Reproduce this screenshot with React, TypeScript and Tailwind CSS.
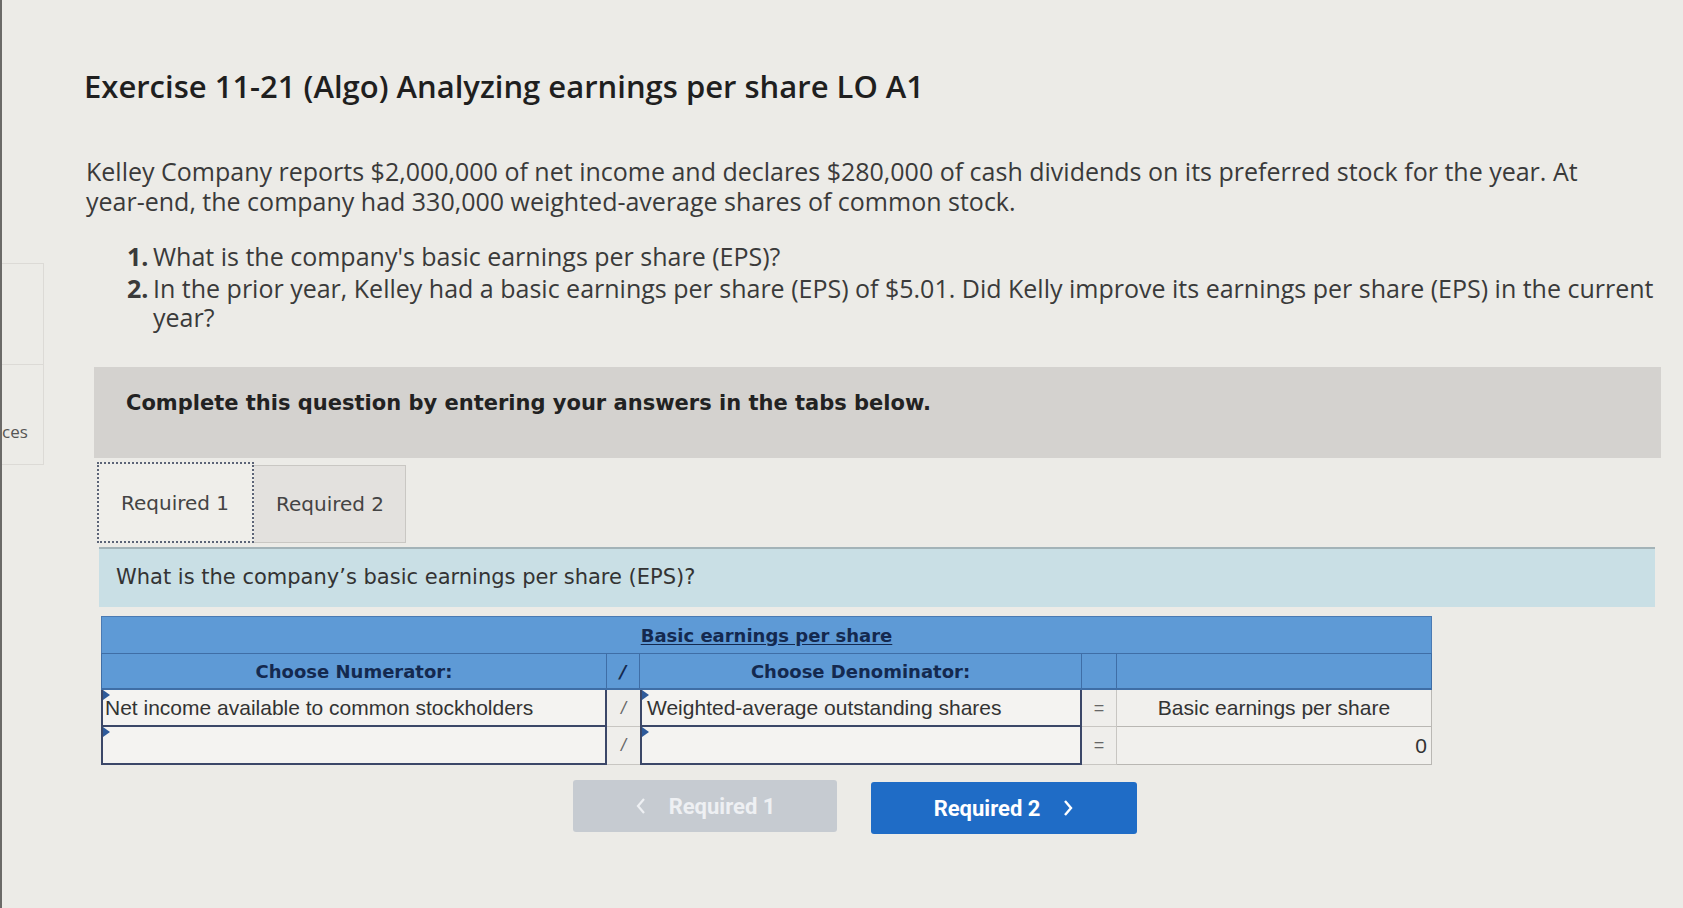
import React from "react";

const body = { fontFamily: "'Open Sans', Lato, sans-serif" } as React.CSSProperties;
const verdana = { fontFamily: "'DejaVu Sans', Verdana, sans-serif" } as React.CSSProperties;
const arial = { fontFamily: "'Liberation Sans', Arial, sans-serif" } as React.CSSProperties;

function Marker() {
  return (
    <span className="absolute left-0 top-0 h-0 w-0 border-y-[5px] border-l-[7px] border-y-transparent border-l-[#2e5a9a]" />
  );
}

export default function App() {
  return (
    <div className="flex min-h-[908px] w-full bg-[#ecebe7] text-[#333]">
      {/* left sidebar */}
      <div className="flex w-[44px] shrink-0 flex-col border-l-2 border-l-[#6b6a68]">
        <div className="h-[263px]" />
        <div className="h-[102px] border-y border-r border-[#dcdad6]" />
        <div className="flex h-[100px] items-start overflow-hidden border-b border-r border-[#dcdad6]">
          <span className="whitespace-nowrap pt-[56px] text-[17px] leading-[22px] text-[#555]" style={body}>
            ces
          </span>
        </div>
      </div>

      {/* main */}
      <div className="flex min-w-0 flex-1 flex-col pl-[40px] pr-[22px] pt-[67px]">
        <h1 className="text-[31px] font-semibold leading-[38px] text-[#1f1f1f]" style={body}>
          Exercise 11-21 (Algo) Analyzing earnings per share LO A1
        </h1>

        <p className="mt-[51px] pl-[2px] text-[25px] leading-[30px] text-[#3a3a3a]" style={body}>
          Kelley Company reports $2,000,000 of net income and declares $280,000 of cash dividends on its preferred stock for the year. At
          <br />
          year-end, the company had 330,000 weighted-average shares of common stock.
        </p>

        <ol className="mt-[26px] flex flex-col gap-[3px] pl-[43px] text-[25px] leading-[29px] text-[#3a3a3a]" style={body}>
          <li className="flex">
            <span className="w-[26px] shrink-0 font-bold">1.</span>
            <span>What is the company's basic earnings per share (EPS)?</span>
          </li>
          <li className="flex">
            <span className="w-[26px] shrink-0 font-bold">2.</span>
            <span>
              In the prior year, Kelley had a basic earnings per share (EPS) of $5.01. Did Kelly improve its earnings per share (EPS) in the current
              <br />
              year?
            </span>
          </li>
        </ol>

        {/* instructions box */}
        <div className="ml-[10px] mt-[35px] h-[91px] bg-[#d4d2cf] pl-[32px] pt-[22px]">
          <p className="text-[21px] font-bold leading-[28px] text-[#222]" style={verdana}>
            Complete this question by entering your answers in the tabs below.
          </p>
        </div>

        {/* tabs */}
        <div className="ml-[13px] mt-[4px] flex items-end" style={verdana}>
          <div className="flex h-[81px] w-[157px] items-center border-2 border-dotted border-[#5c6477] bg-[#efeeea] pl-[22px] text-[20px] text-[#444]">
            Required 1
          </div>
          <div className="flex h-[78px] w-[152px] items-center border border-l-0 border-[#c9c7c3] bg-[#e3e1de] pl-[22px] text-[20px] text-[#444]">
            Required 2
          </div>
        </div>

        {/* question bar */}
        <div className="ml-[15px] mt-[4px] flex h-[60px] w-[1556px] items-center border-t-2 border-[#a3b3b8] bg-[#c9dfe5] pl-[17px]">
          <p className="text-[21px] text-[#333]" style={verdana}>
            What is the company’s basic earnings per share (EPS)?
          </p>
        </div>

        {/* table */}
        <div className="ml-[17px] mt-[9px] w-[1331px]">
          <div className="grid grid-cols-[506px_33px_442px_35px_315px]">
            {/* header row 1 */}
            <div
              className="col-span-5 flex h-[37px] items-center justify-center border border-b-0 border-[#4a7ab3] bg-[#5e9ad6] text-[18px] font-bold text-[#14294f] underline underline-offset-2"
              style={verdana}
            >
              Basic earnings per share
            </div>
            {/* header row 2 */}
            <div className="flex h-[37px] items-center justify-center border-x border-t border-b-2 border-[#3f6ea6] bg-[#5e9ad6] text-[18px] font-bold text-[#14294f]" style={verdana}>
              Choose Numerator:
            </div>
            <div className="flex h-[37px] items-center justify-center border-r border-t border-b-2 border-[#3f6ea6] bg-[#5e9ad6] text-[18px] font-bold italic text-[#14294f]" style={verdana}>
              /
            </div>
            <div className="flex h-[37px] items-center justify-center border-r border-t border-b-2 border-[#3f6ea6] bg-[#5e9ad6] text-[18px] font-bold text-[#14294f]" style={verdana}>
              Choose Denominator:
            </div>
            <div className="h-[37px] border-r border-t border-b-2 border-[#3f6ea6] bg-[#5e9ad6]" />
            <div className="h-[37px] border-r border-t border-b-2 border-[#3f6ea6] bg-[#5e9ad6]" />

            {/* row 3 */}
            <div className="relative flex h-[37px] items-center border-2 border-t-0 border-[#3b4768] bg-[#f4f3f1] pl-[2px] text-[21px] text-[#333]" style={arial}>
              <Marker />
              Net income available to common stockholders
            </div>
            <div className="flex h-[37px] items-center justify-center border-b border-[#c8c6c2] bg-[#efeeeb] text-[18px] italic text-[#666]" style={arial}>
              /
            </div>
            <div className="relative flex h-[37px] items-center border-2 border-t-0 border-[#3b4768] bg-[#f4f3f1] pl-[5px] text-[21px] text-[#333]" style={arial}>
              <Marker />
              Weighted-average outstanding shares
            </div>
            <div className="flex h-[37px] items-center justify-center border-b border-r border-[#c8c6c2] bg-[#efeeeb] text-[18px] text-[#666]" style={arial}>
              =
            </div>
            <div className="flex h-[37px] items-center justify-center border-b border-r border-[#b9b7b3] bg-[#f1f0ed] text-[21px] text-[#333]" style={arial}>
              Basic earnings per share
            </div>

            {/* row 4 */}
            <div className="relative h-[38px] border-2 border-t-0 border-[#3b4768] bg-[#f4f3f1]">
              <Marker />
            </div>
            <div className="flex h-[38px] items-center justify-center border-b border-[#c8c6c2] bg-[#efeeeb] text-[18px] italic text-[#666]" style={arial}>
              /
            </div>
            <div className="relative h-[38px] border-2 border-t-0 border-[#3b4768] bg-[#f4f3f1]">
              <Marker />
            </div>
            <div className="flex h-[38px] items-center justify-center border-b border-r border-[#c8c6c2] bg-[#efeeeb] text-[18px] text-[#666]" style={arial}>
              =
            </div>
            <div className="flex h-[38px] items-center justify-end border-b border-r border-[#b9b7b3] bg-[#f1f0ed] pr-[4px] text-[21px] text-[#333]" style={arial}>
              0
            </div>
          </div>
        </div>

        {/* nav buttons */}
        <div className="ml-[489px] mt-[15px] flex items-start gap-[34px]" style={{ fontFamily: "Roboto, sans-serif" }}>
          <button className="flex h-[52px] w-[264px] items-center justify-center gap-[22px] rounded-[3px] bg-[#c6cbd1] text-[22px] font-bold text-[#eef0f3]">
            <svg width="12" height="18" viewBox="0 0 12 18" fill="none" stroke="currentColor" strokeWidth="2.2">
              <path d="M9 2 L3 9 L9 16" />
            </svg>
            Required 1
          </button>
          <button className="mt-[2px] flex h-[52px] w-[266px] items-center justify-center gap-[22px] rounded-[3px] bg-[#1f6cc6] text-[22px] font-bold text-white">
            Required 2
            <svg width="12" height="18" viewBox="0 0 12 18" fill="none" stroke="currentColor" strokeWidth="2.4">
              <path d="M3 2 L9 9 L3 16" />
            </svg>
          </button>
        </div>
      </div>
    </div>
  );
}
